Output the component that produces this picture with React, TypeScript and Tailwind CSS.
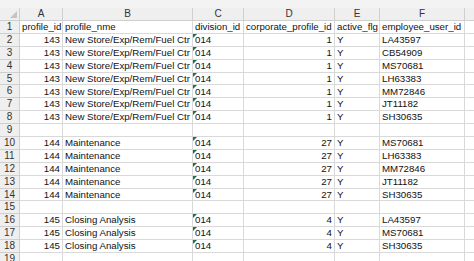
import React from 'react';

const cols = [
  { key: 'A', w: 'w-[43px]' },
  { key: 'B', w: 'w-[130px]' },
  { key: 'C', w: 'w-[51px]' },
  { key: 'D', w: 'w-[91px]' },
  { key: 'E', w: 'w-[45px]' },
  { key: 'F', w: 'w-[85px]' },
  { key: 'G', w: 'w-[40px]' },
];

type Row = [string, string, string, string, string, string] | null;

const header: Row = ['profile_id', 'profile_nme', 'division_id', 'corporate_profile_id', 'active_flg', 'employee_user_id'];

const groups: { id: string; name: string; corp: string; users: string[] }[] = [
  { id: '143', name: 'New Store/Exp/Rem/Fuel Ctr', corp: '1', users: ['LA43597', 'CB54909', 'MS70681', 'LH63383', 'MM72846', 'JT11182', 'SH30635'] },
  { id: '144', name: 'Maintenance', corp: '27', users: ['MS70681', 'LH63383', 'MM72846', 'JT11182', 'SH30635'] },
  { id: '145', name: 'Closing Analysis', corp: '4', users: ['LA43597', 'MS70681', 'SH30635'] },
];

const rows: Row[] = [];
groups.forEach((g, i) => {
  if (i > 0) rows.push(null);
  g.users.forEach((u) => rows.push([g.id, g.name, '014', g.corp, 'Y', u]));
});
rows.push(null);

function Cell({ w, children, right, flag }: { w: string; children?: React.ReactNode; right?: boolean; flag?: boolean }) {
  return (
    <div
      className={`${w} relative shrink-0 h-full border-r border-b border-[#d9d9d9] px-[2px] flex items-center overflow-hidden whitespace-nowrap ${
        right ? 'justify-end' : 'justify-start'
      }`}
    >
      {flag && (
        <span className="absolute top-0 left-0 w-0 h-0 border-t-[4px] border-t-[#1e7145] border-r-[4px] border-r-transparent" />
      )}
      {children}
    </div>
  );
}

export default function App() {
  return (
    <div
      className="w-[474px] h-[261px] overflow-hidden bg-white text-[9.7px] leading-none text-[#111]"
      style={{ fontFamily: '"Liberation Sans", Arial, sans-serif' }}
    >
      <div className="h-[8px] bg-[#f3f3f3]" />

      {/* column letters */}
      <div className="flex h-[13px] bg-[#efefef] text-[#333]">
        <div className="w-[20px] shrink-0 h-full border-r border-b border-[#cfcfcf] relative">
          <span className="absolute right-[2px] bottom-[2px] w-0 h-0 border-l-[7px] border-l-transparent border-b-[7px] border-b-[#c4c4c4]" />
        </div>
        {cols.map((c) => (
          <div key={c.key} className={`${c.w} shrink-0 h-full border-r border-b border-[#cfcfcf] flex items-center justify-center text-[10px]`}>
            {c.key !== 'G' ? c.key : ''}
          </div>
        ))}
      </div>

      {[header, ...rows].map((r, i) => (
        <div key={i} className="flex h-[12.9px]">
          <div className="w-[20px] shrink-0 h-full bg-[#efefef] border-r border-b border-[#cfcfcf] flex items-center justify-center text-[#333] text-[10px]">
            {i + 1}
          </div>
          {i === 0 ? (
            <>
              {r!.map((t, j) => (
                <Cell key={j} w={cols[j].w}>
                  {t}
                </Cell>
              ))}
              <Cell w={cols[6].w} />
            </>
          ) : r ? (
            <>
              <Cell w={cols[0].w} right>{r[0]}</Cell>
              <Cell w={cols[1].w}>{r[1]}</Cell>
              <Cell w={cols[2].w} flag>{r[2]}</Cell>
              <Cell w={cols[3].w} right>{r[3]}</Cell>
              <Cell w={cols[4].w}>{r[4]}</Cell>
              <Cell w={cols[5].w}>{r[5]}</Cell>
              <Cell w={cols[6].w} />
            </>
          ) : (
            cols.map((c) => <Cell key={c.key} w={c.w} />)
          )}
        </div>
      ))}
    </div>
  );
}
